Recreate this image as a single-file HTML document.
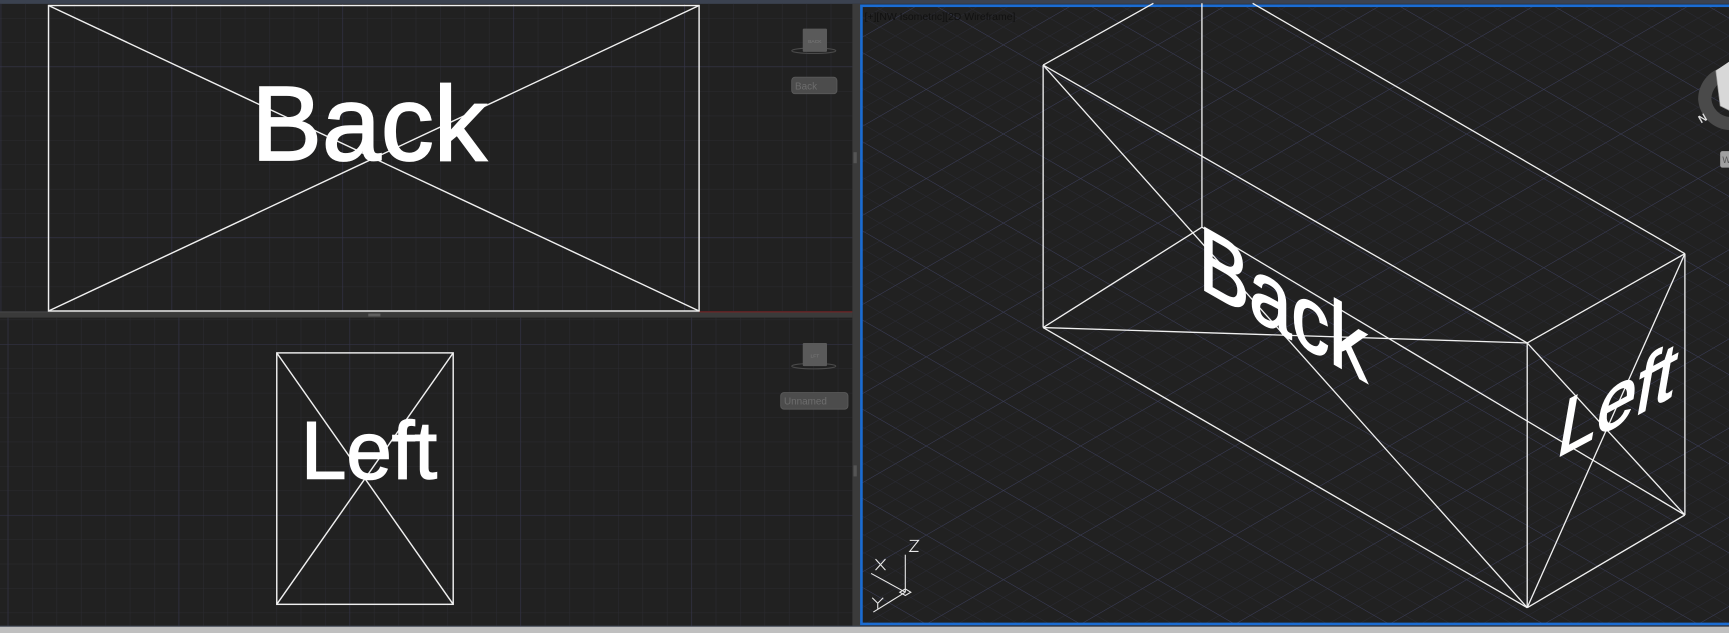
<!DOCTYPE html>
<html><head><meta charset="utf-8"><style>
html,body{margin:0;padding:0;background:#212121;overflow:hidden}
svg{display:block}
</style></head><body>
<svg width="1729" height="633" viewBox="0 0 1568 574" preserveAspectRatio="none" xmlns="http://www.w3.org/2000/svg" font-family="Liberation Sans, Arial, sans-serif">
<defs>
<pattern id="g1" width="22.14" height="22.14" patternUnits="userSpaceOnUse" x="0.6" y="-5.8">
<path d="M0 0V22.14M0 0H22.14" stroke="#2b2b30" stroke-width="1" fill="none"/>
</pattern>
<pattern id="G1" width="155" height="155" patternUnits="userSpaceOnUse" x="0.6" y="-95">
<path d="M0 0V155M0 0H155" stroke="#34344a" stroke-width="1" fill="none"/>
</pattern>
<pattern id="g2" width="22.14" height="22.14" patternUnits="userSpaceOnUse" x="7" y="2">
<path d="M0 0V22.14M0 0H22.14" stroke="#2b2b30" stroke-width="1" fill="none"/>
</pattern>
<pattern id="G2" width="155" height="155" patternUnits="userSpaceOnUse" x="7" y="2">
<path d="M0 0V155M0 0H155" stroke="#34344a" stroke-width="1" fill="none"/>
</pattern>
<pattern id="i1" width="400" height="14" patternUnits="userSpaceOnUse" patternTransform="rotate(30)">
<path d="M0 0H400" stroke="#2a2b35" stroke-width="0.8"/>
</pattern>
<pattern id="i2" width="400" height="14" patternUnits="userSpaceOnUse" patternTransform="rotate(-30)">
<path d="M0 0H400" stroke="#2a2b35" stroke-width="0.8"/>
</pattern>
<pattern id="I1" width="400" height="70" patternUnits="userSpaceOnUse" patternTransform="rotate(30)">
<path d="M0 0H400" stroke="#3a3c56" stroke-width="1"/>
</pattern>
<pattern id="I2" width="400" height="70" patternUnits="userSpaceOnUse" patternTransform="rotate(-30)">
<path d="M0 0H400" stroke="#3a3c56" stroke-width="1"/>
</pattern>
</defs>

<rect x="0" y="0" width="1568" height="574" fill="#212121"/>
<rect x="0" y="0" width="1568" height="3.5" fill="#3b4250"/>
<rect x="0" y="3.5" width="773" height="279" fill="url(#g1)"/>
<rect x="0" y="3.5" width="773" height="279" fill="url(#G1)"/>
<rect x="0" y="288" width="773" height="280" fill="url(#g2)"/>
<rect x="0" y="288" width="773" height="280" fill="url(#G2)"/>
<rect x="0" y="282.5" width="773" height="5.5" fill="#3a3a3a"/>
<rect x="0" y="282.5" width="773" height="1" fill="#454545"/>
<rect x="334" y="284.5" width="11" height="0.8" fill="#777"/>
<rect x="334" y="286" width="11" height="0.8" fill="#777"/>
<line x1="634" y1="282.8" x2="773" y2="282.8" stroke="#7a1c1c" stroke-width="1"/>
<rect x="773" y="3.5" width="7" height="566" fill="#3b3b3b"/>
<rect x="774" y="138" width="3" height="10" fill="#555"/>
<rect x="774" y="422" width="3" height="10" fill="#555"/>
<rect x="781" y="5" width="787" height="561" fill="url(#i1)"/>
<rect x="781" y="5" width="787" height="561" fill="url(#i2)"/>
<rect x="781" y="5" width="787" height="561" fill="url(#I1)"/>
<rect x="781" y="5" width="787" height="561" fill="url(#I2)"/>
<rect x="781.2" y="5.2" width="800" height="560.6" fill="none" stroke="#1b6cd2" stroke-width="2.4"/>
<rect x="0" y="568" width="1568" height="6" fill="#bfbfbf"/>
<rect x="0" y="567.3" width="1568" height="1" fill="#3b4250"/>

<g stroke="#f0f0f0" stroke-width="1.3" fill="none">
<rect x="44" y="5" width="590" height="277"/>
<line x1="44" y1="5" x2="634" y2="282"/>
<line x1="634" y1="5" x2="44" y2="282"/>
</g>
<text x="228" y="145" font-size="96" fill="#fff" stroke="#fff" stroke-width="1.6">Back</text>

<g stroke="#f0f0f0" stroke-width="1.3" fill="none">
<rect x="251" y="320" width="160" height="228"/>
<line x1="251" y1="320" x2="411" y2="548"/>
<line x1="411" y1="320" x2="251" y2="548"/>
</g>
<text x="273" y="434" font-size="74" fill="#fff" stroke="#fff" stroke-width="1.4">Left</text>

<ellipse cx="738" cy="46" rx="20" ry="2.5" fill="none" stroke="#4a4a4a" stroke-width="1"/>
<rect x="728" y="26" width="22" height="21" rx="1" fill="#5a5a5a"/>
<text x="739" y="39" font-size="4.5" fill="#7a7a7a" text-anchor="middle">BACK</text>
<rect x="718" y="70" width="41" height="15" rx="3" fill="#4c4c4c" stroke="#5a5a5a" stroke-width="0.8"/>
<text x="721" y="81" font-size="9" fill="#6d6d6d">Back</text>
<ellipse cx="738" cy="332" rx="20" ry="2.5" fill="none" stroke="#4a4a4a" stroke-width="1"/>
<rect x="728" y="311" width="22" height="21" rx="1" fill="#5a5a5a"/>
<text x="739" y="324" font-size="4.5" fill="#7a7a7a" text-anchor="middle">LFT</text>
<rect x="708" y="356" width="61" height="15" rx="3" fill="#4c4c4c" stroke="#5a5a5a" stroke-width="0.8"/>
<text x="711" y="367" font-size="9" fill="#6d6d6d">Unnamed</text>

<text x="784" y="18" font-size="9.5" fill="#111">[+][NW Isometric][2D Wireframe]</text>

<g stroke="#f0f0f0" stroke-width="1.2" fill="none">
<line x1="946" y1="59" x2="1046" y2="3"/>
<line x1="1090" y1="3" x2="1090" y2="206"/>
<line x1="1136" y1="3" x2="1528" y2="230"/>
<line x1="946" y1="59" x2="946" y2="297"/>
<line x1="946" y1="59" x2="1385" y2="311"/>
<line x1="946" y1="59" x2="1385" y2="551"/>
<line x1="1090" y1="206" x2="946" y2="297"/>
<line x1="1090" y1="206" x2="1528" y2="467"/>
<line x1="946" y1="297" x2="1385" y2="311"/>
<line x1="946" y1="297" x2="1385" y2="551"/>
<line x1="1385" y1="311" x2="1528" y2="230"/>
<line x1="1385" y1="311" x2="1385" y2="551"/>
<line x1="1385" y1="311" x2="1528" y2="467"/>
<line x1="1528" y1="230" x2="1528" y2="467"/>
<line x1="1528" y1="230" x2="1385" y2="551"/>
<line x1="1385" y1="551" x2="1528" y2="467"/>
</g>
<text font-size="80" fill="#fff" stroke="#fff" stroke-width="1.5" transform="matrix(0.86,0.49,0,1.03,1087,260)">Back</text>
<text font-size="72" fill="#fff" stroke="#fff" stroke-width="1.5" transform="matrix(0.88,-0.47,-0.18,1.04,1410,416)">Left</text>

<g stroke="#e8e8e8" stroke-width="1" fill="none">
<line x1="821" y1="537" x2="821" y2="503"/>
<line x1="821" y1="537" x2="790" y2="520"/>
<line x1="821" y1="537" x2="792" y2="555"/>
<path d="M816 537 L821 534 L826 537 L821 540 Z"/>
<path d="M825 490 H833 L825 500 H833"/>
<path d="M794 507 L803 517 M803 507 L794 517"/>
<path d="M791 542 L796 547 L801 542 M796 547 V552"/>
</g>

<path d="M1568 60 A30 30 0 0 0 1540 90 A30 30 0 0 0 1568 118 L1568 106 A18 18 0 0 1 1552 90 A18 18 0 0 1 1568 72 Z" fill="#4a4a4a"/>
<text x="1540" y="110" font-size="10" fill="#ddd" font-weight="bold" transform="rotate(-30 1545 106)">N</text>
<path d="M1556 64 L1568 56 L1568 100 L1560 96 Z" fill="#d8d8d8"/>
<path d="M1556 64 L1560 96 L1568 100" fill="none" stroke="#999" stroke-width="0.6"/>
<rect x="1560" y="137" width="12" height="15" rx="2" fill="#a0a0a0"/>
<text x="1562" y="148" font-size="8" fill="#555">W</text>
</svg>
</body></html>
